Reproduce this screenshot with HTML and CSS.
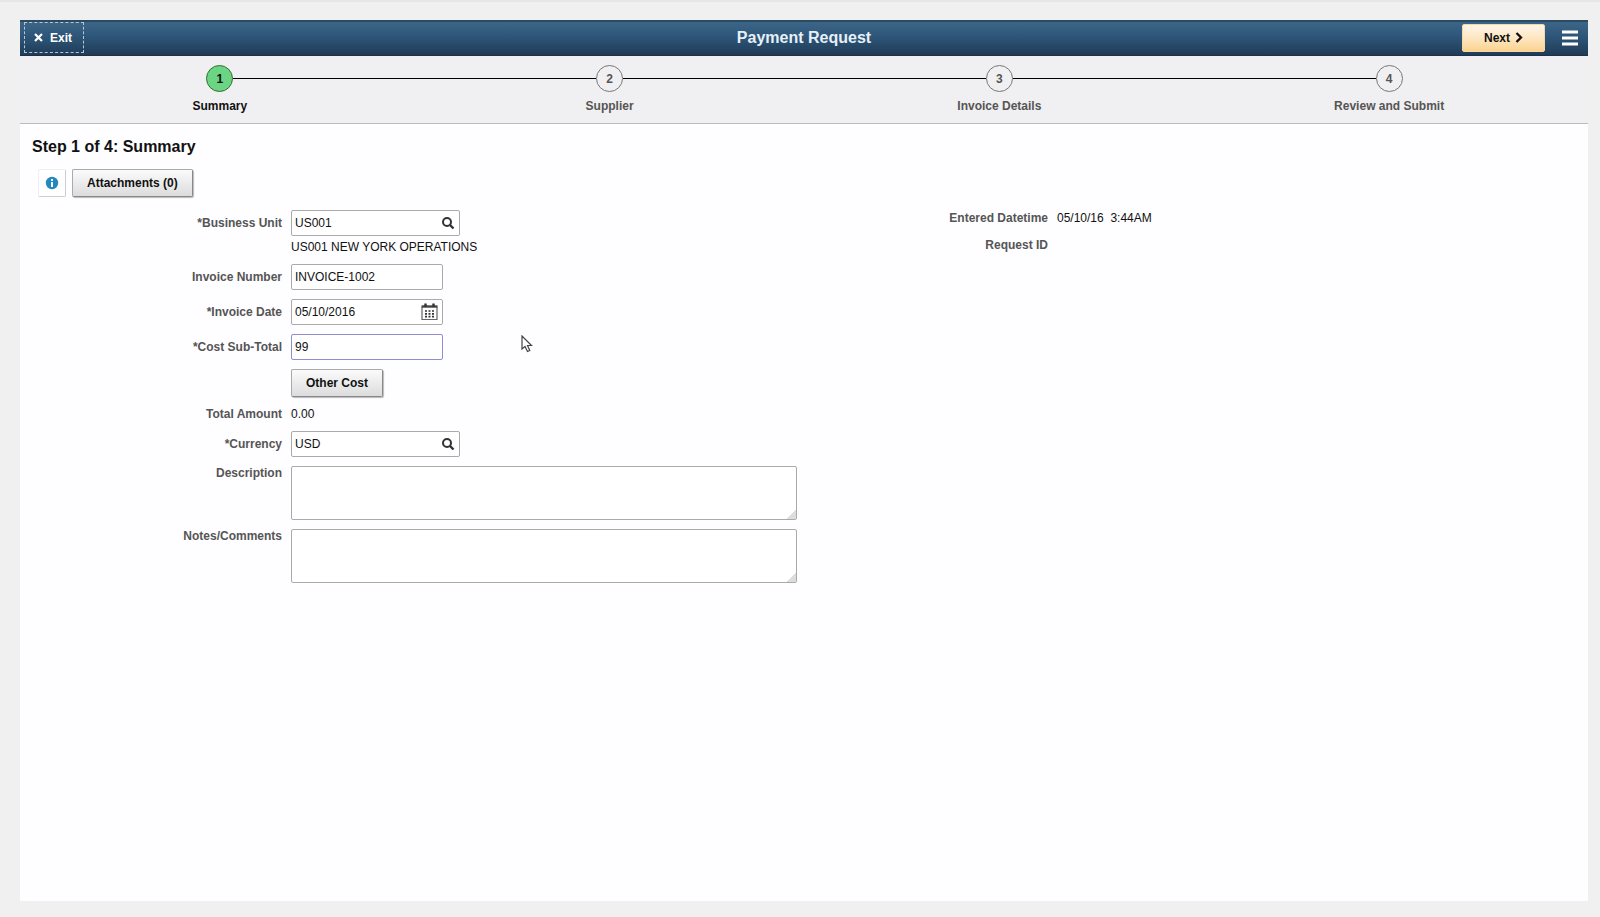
FILE: index.html
```html
<!DOCTYPE html>
<html lang="en">
<head>
	<meta charset="utf-8">
	<title>Payment Request</title>
	<link rel="stylesheet" href="styles.css">
</head>
<body>
<div class="page">
	<header class="banner">
		<div class="bannerLeft">
			<button type="button" class="exitBtn">
				<svg width="9" height="9" viewBox="0 0 9 9"><path d="M1 1L8 8M8 1L1 8" stroke="#fff" stroke-width="2.2"/></svg>
				Exit
			</button>
		</div>
		<h1>Payment Request</h1>
		<div class="bannerRight">
			<button type="button" class="nextBtn">
				Next
				<svg width="8" height="11" viewBox="0 0 8 11"><path d="M1.5 1L6 5.5L1.5 10" fill="none" stroke="#111" stroke-width="2.3"/></svg>
			</button>
			<button type="button" class="menuBtn" aria-label="Actions">
				<svg width="16" height="16" viewBox="0 0 16 16"><path d="M0 2H16M0 8H16M0 14H16" stroke="#fff" stroke-width="3"/></svg>
			</button>
		</div>
	</header>

	<ol class="steps">
		<li class="current"><div class="track"><span class="dot">1</span></div><div>Summary</div></li>
		<li><div class="track"><span class="dot">2</span></div><div>Supplier</div></li>
		<li><div class="track"><span class="dot">3</span></div><div>Invoice Details</div></li>
		<li><div class="track"><span class="dot">4</span></div><div>Review and Submit</div></li>
	</ol>

	<main>
		<h2>Step 1 of 4: Summary</h2>
		<div class="toolbar">
			<button type="button" class="infoBtn" aria-label="Information">
				<svg width="14" height="14" viewBox="0 0 14 14"><circle cx="7" cy="7" r="6.2" fill="#2189bd"/><path d="M7 3V5M7 6V11" stroke="#fff" stroke-width="2"/></svg>
			</button>
			<button type="button" class="btn">Attachments (0)</button>
		</div>

		<form class="form">
			<div class="fields">
				<div class="row">
					<label for="businessUnit">*Business Unit</label>
					<div class="lookup">
						<input type="text" id="businessUnit" value="US001">
						<button type="button" class="iconBtn" aria-label="Look up Business Unit">
							<svg width="14" height="14" viewBox="0 0 14 14"><circle cx="6" cy="6" r="4" fill="none" stroke="#333" stroke-width="2"/><path d="M9 9L12.5 12.5" stroke="#333" stroke-width="2.4"/></svg>
						</button>
					</div>
				</div>
				<div class="row hint"><span class="label"></span><span>US001 NEW YORK OPERATIONS</span></div>
				<div class="row">
					<label for="invoiceNumber">Invoice Number</label>
					<div class="box"><input type="text" id="invoiceNumber" value="INVOICE-1002"></div>
				</div>
				<div class="row">
					<label for="invoiceDate">*Invoice Date</label>
					<div class="box">
						<input type="text" id="invoiceDate" value="05/10/2016">
						<button type="button" class="iconBtn" aria-label="Pick a date">
							<svg width="17" height="18" viewBox="0 0 17 18">
								<path d="M1 4V16.5H16V4" fill="#fff" stroke="#666" stroke-width="1.2"/>
								<path d="M0.5 3.5H16.5" stroke="#444" stroke-width="2.4"/>
								<path d="M4.5 0.5V4M12.5 0.5V4" stroke="#333" stroke-width="2.4"/>
								<path d="M4 8H6M7.5 8H9.5M11 8H13M4 10.8H6M7.5 10.8H9.5M11 10.8H13M4 13.6H6M7.5 13.6H9.5M11 13.6H13" stroke="#333" stroke-width="1.7"/>
							</svg>
						</button>
					</div>
				</div>
				<div class="row">
					<label for="costSubTotal">*Cost Sub-Total</label>
					<div class="box active"><input type="text" id="costSubTotal" value="99"></div>
				</div>
				<div class="row">
					<span class="label"></span>
					<button type="button" class="btn">Other Cost</button>
				</div>
				<div class="row total">
					<label for="totalAmount">Total Amount</label>
					<output id="totalAmount">0.00</output>
				</div>
				<div class="row">
					<label for="currency">*Currency</label>
					<div class="lookup">
						<input type="text" id="currency" value="USD">
						<button type="button" class="iconBtn" aria-label="Look up Currency">
							<svg width="14" height="14" viewBox="0 0 14 14"><circle cx="6" cy="6" r="4" fill="none" stroke="#333" stroke-width="2"/><path d="M9 9L12.5 12.5" stroke="#333" stroke-width="2.4"/></svg>
						</button>
					</div>
				</div>
				<div class="row tall">
					<label for="description">Description</label>
					<textarea id="description"></textarea>
				</div>
				<div class="row tall">
					<label for="notes">Notes/Comments</label>
					<textarea id="notes"></textarea>
				</div>
			</div>

			<div class="info">
				<div class="row">
					<label for="entered">Entered Datetime</label>
					<output id="entered">05/10/16&nbsp; 3:44AM</output>
				</div>
				<div class="row">
					<label for="requestId">Request ID</label>
					<output id="requestId"></output>
				</div>
			</div>
		</form>
	</main>
</div>

<!-- mouse pointer -->
<svg class="pointer" width="12" height="18" viewBox="0 0 12 18"><path d="M1 1V14L4 11.5L6.5 16.5L8.8 15.5L6.5 10.5H10.5Z" fill="#fff" stroke="#444" stroke-width="1.2"/></svg>
</body>
</html>
```

FILE: styles.css
```css
* {
	box-sizing: border-box;
}

body {
	margin: 0;
	min-height: 100vh;
	display: flex;
	padding: 18px 12px 16px 20px;
	border-top: 2px solid #e6e6e6;
	background: #f0f0f0;
	color: #111;
	font-family: "Liberation Sans", Arial, sans-serif;
	font-size: 12px;
}

button, input, textarea {
	font: inherit;
	color: inherit;
}

button {
	padding: 0;
	border: 0;
	background: none;
	font-weight: bold;
}

.page {
	flex: 1;
	background: #fefdff;
}

/* Banner */
.banner {
	display: grid;
	grid-template-columns: 1fr auto 1fr;
	align-items: center;
	height: 36px;
	padding-bottom: 2px;
	border-top: 2px solid #2b4a60;
	border-bottom: 1px solid #1c3148;
	background: linear-gradient(#3c6689, #2c5375 50%, #1f3b56);
	color: #fff;
}

.banner h1 {
	margin: 0;
	color: #e6f0f8;
	font-size: 16px;
}

.bannerLeft {
	padding-left: 4px;
}

.exitBtn {
	display: flex;
	align-items: center;
	gap: 7px;
	width: 60px;
	height: 31px;
	padding-left: 9px;
	border: 1px dashed #b5c6d4;
}

.bannerRight {
	display: flex;
	justify-content: flex-end;
	align-items: center;
	gap: 17px;
	padding-right: 10px;
}

.nextBtn {
	display: flex;
	align-items: center;
	justify-content: center;
	gap: 5px;
	width: 83px;
	height: 28px;
	border: 1px solid #f6d9a0;
	border-radius: 2px;
	background: linear-gradient(#fff6ea, #fde3b9 60%, #fbd28d);
	color: #111;
}

.menuBtn {
	display: flex;
}

/* Train of steps */
.steps {
	display: flex;
	margin: 0;
	padding: 9px 4px 9px 5px;
	border-bottom: 1px solid #bbb;
	background: #f0eff1;
	color: #555;
	font-weight: bold;
	line-height: 16px;
	text-align: center;
	list-style: none;
}

.steps li {
	flex: 1;
}

.track {
	display: flex;
	align-items: center;
	margin-bottom: 6px;
}

.track::before,
.track::after {
	content: "";
	flex: 1;
	height: 1px;
	background: #000;
}

.steps li:first-child .track::before,
.steps li:last-child .track::after {
	background: none;
}

.dot {
	width: 27px;
	height: 27px;
	border: 1px solid #777;
	border-radius: 50%;
	line-height: 26px;
}

.current {
	color: #111;
}

.current .dot {
	border-color: #2f6f2f;
	background: #6bd584;
}

/* Page content */
h2 {
	margin: 0;
	padding: 13px 12px 12px;
	font-size: 16px;
	line-height: 20px;
}

.toolbar {
	display: flex;
	gap: 6px;
	padding-left: 18px;
}

.btn {
	height: 28px;
	padding: 0 14px;
	border: 1px solid #aaa;
	border-right-color: #888;
	border-bottom-color: #888;
	border-radius: 2px;
	background: linear-gradient(#fbfbfb, #dcdcdc);
	box-shadow: 1px 1px 1px #bbb;
}

.infoBtn {
	display: flex;
	align-items: center;
	justify-content: center;
	width: 28px;
	border: 1px solid #eee;
	border-right-color: #ccc;
	border-bottom-color: #ccc;
	border-radius: 2px;
	background: #fff;
}

.form {
	display: grid;
	grid-template-columns: 1fr 1fr;
	padding: 13px 18px 0;
}

.fields {
	display: flex;
	flex-direction: column;
	gap: 9px;
}

.row {
	display: flex;
	align-items: center;
	gap: 9px;
}

.row label,
.label {
	width: 244px;
	color: #555;
	font-weight: bold;
	text-align: right;
}

.hint {
	margin-top: -6px;
	line-height: 16px;
}

.total {
	line-height: 16px;
}

.box,
.lookup {
	display: flex;
	align-items: center;
	width: 152px;
	height: 26px;
	border: 1px solid #aaa;
	border-radius: 2px;
	background: #fff;
}

.lookup {
	width: 169px;
}

.active {
	border-color: #8e8ed0;
}

.box input,
.lookup input {
	flex: 1;
	min-width: 0;
	padding: 0 0 0 3px;
	border: 0;
	outline: 0;
	background: none;
}

.iconBtn {
	display: flex;
	padding-right: 4px;
}

.tall {
	align-items: flex-start;
}

textarea {
	width: 506px;
	height: 54px;
	border: 1px solid #aaa;
	border-radius: 2px;
	background: #fff;
}

textarea::-webkit-resizer {
	background: linear-gradient(135deg, #fff 70%, #ddd 70%);
}

.info {
	display: flex;
	flex-direction: column;
	gap: 11px;
	line-height: 16px;
}

.pointer {
	position: absolute;
	left: 521px;
	top: 335px;
}
```
